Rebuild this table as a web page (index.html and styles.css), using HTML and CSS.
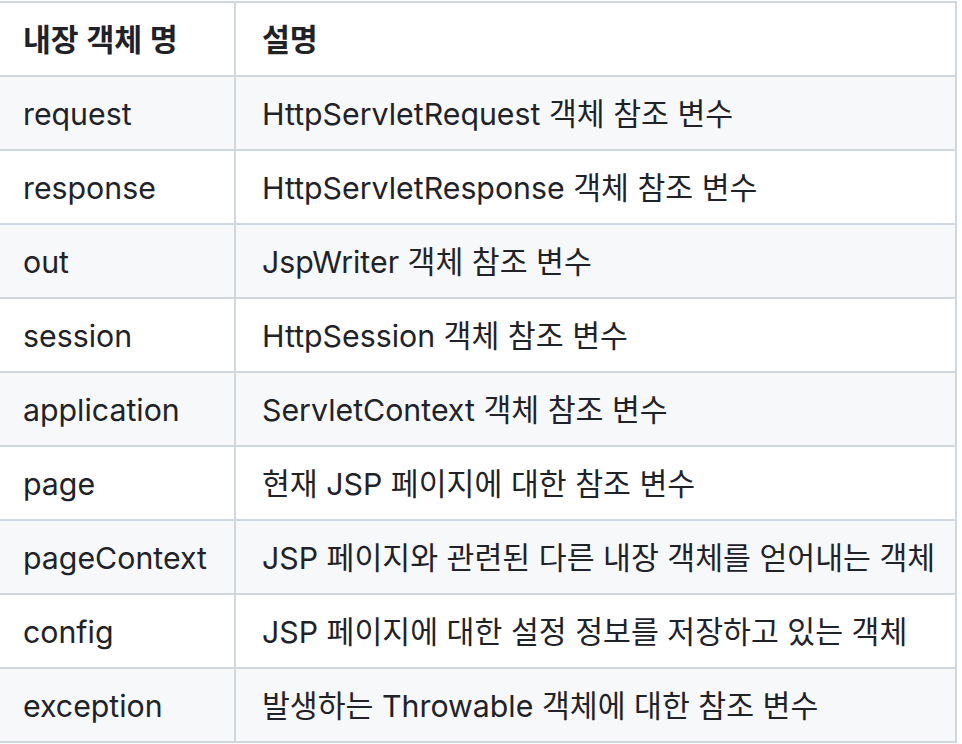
FILE: index.html
```html
<!DOCTYPE html>
<html lang="ko">
<head>
<meta charset="utf-8">
<link rel="stylesheet" href="styles.css">
</head>
<body>
<table class="md-table">
  <colgroup>
    <col class="col-name">
    <col class="col-desc">
  </colgroup>
  <thead>
    <tr>
      <th>내장 객체 명</th>
      <th>설명</th>
    </tr>
  </thead>
  <tbody>
    <tr><td>request</td><td>HttpServletRequest 객체 참조 변수</td></tr>
    <tr><td>response</td><td>HttpServletResponse 객체 참조 변수</td></tr>
    <tr><td>out</td><td>JspWriter 객체 참조 변수</td></tr>
    <tr><td>session</td><td>HttpSession 객체 참조 변수</td></tr>
    <tr><td>application</td><td>ServletContext 객체 참조 변수</td></tr>
    <tr><td>page</td><td>현재 JSP 페이지에 대한 참조 변수</td></tr>
    <tr><td>pageContext</td><td>JSP 페이지와 관련된 다른 내장 객체를 얻어내는 객체</td></tr>
    <tr><td>config</td><td>JSP 페이지에 대한 설정 정보를 저장하고 있는 객체</td></tr>
    <tr><td>exception</td><td>발생하는 Throwable 객체에 대한 참조 변수</td></tr>
  </tbody>
</table>
</body>
</html>
```

FILE: styles.css
```css
html, body {
  margin: 0;
  padding: 0;
  background: #ffffff;
}

body {
  padding-top: 1px;
  font-family: Inter, "Noto Sans CJK KR", sans-serif;
  font-size: 30.3px;
  line-height: 48px;
  color: #1f2328;
  overflow: hidden;
}

.md-table {
  border-collapse: collapse;
  table-layout: fixed;
  width: 962px;
  margin-left: -5px;
}

.col-name {
  width: 239px;
}

.md-table th,
.md-table td {
  height: 48px;
  padding: 13px 26px 11px;
  border: 2px solid #d0d7de;
  text-align: left;
  white-space: nowrap;
  vertical-align: middle;
}

.md-table th {
  font-weight: 600;
}

.md-table tbody tr:nth-child(odd) {
  background: #f6f8fa;
}
```
